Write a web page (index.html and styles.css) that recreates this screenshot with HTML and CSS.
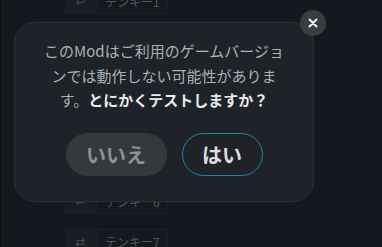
FILE: index.html
```html
<!DOCTYPE html>
<html lang="ja">
<head>
<meta charset="utf-8">
<link rel="stylesheet" href="styles.css">
</head>
<body>
<div class="frame">
  <div class="list">
    <div class="row"><div class="ico">↩</div><div class="lbl">テンキー1</div></div>
    <div class="row"><div class="ico">↩</div><div class="lbl">テンキー2</div></div>
    <div class="row"><div class="ico">↩</div><div class="lbl">テンキー3</div></div>
    <div class="row"><div class="ico">↩</div><div class="lbl">テンキー4</div></div>
    <div class="row"><div class="ico">↩</div><div class="lbl">テンキー5</div></div>
    <div class="row"><div class="ico">↩</div><div class="lbl">テンキー6</div></div>
    <div class="row"><div class="ico">⇄</div><div class="lbl">テンキー7</div></div>
  </div>
  <div class="dialog">
    <button class="close" aria-label="閉じる">
      <svg width="10" height="10" viewBox="0 0 10 10"><path d="M1.5 1.5 L8.5 8.5 M8.5 1.5 L1.5 8.5" stroke="#f2f2f2" stroke-width="2" stroke-linecap="round"/></svg>
    </button>
    <p class="msg">このModはご利用のゲームバージョンでは動作しない可能性があります。<strong>とにかくテストしますか？</strong></p>
    <div class="actions">
      <button class="btn no">いいえ</button>
      <button class="btn yes">はい</button>
    </div>
  </div>
</div>
</body>
</html>
```
FILE: styles.css
```css
html, body {
  margin: 0;
  padding: 0;
  background: #14171d;
  font-family: "Noto Sans CJK JP", "Noto Sans", sans-serif;
}
.frame {
  position: relative;
  width: 382px;
  height: 247px;
  overflow: hidden;
  background: #14171d;
  border-left: 1px solid #0c0e12;
  box-sizing: border-box;
}
.list {
  display: flex;
  flex-direction: column;
  gap: 15px;
  margin-top: -11px;
  padding-left: 64px;
}
.row {
  display: flex;
  height: 25px;
  width: 103px;
}
.ico {
  width: 31px;
  background: #1a1d23;
  color: #45484e;
  font-size: 12px;
  display: flex;
  align-items: center;
  justify-content: center;
  font-family: "DejaVu Sans", sans-serif;
}
.lbl {
  flex: 1;
  border: 1px solid #1c1f25;
  background: #15181e;
  color: #54575d;
  font-size: 12px;
  display: flex;
  align-items: center;
  padding-left: 8px;
  white-space: nowrap;
}
.dialog {
  position: absolute;
  left: 13px;
  top: 22px;
  width: 300px;
  height: 180px;
  box-sizing: border-box;
  background: #1f2228;
  border: 1px solid #2b2e34;
  border-radius: 20px;
  padding: 16px 24px 25px;
}
.close {
  position: absolute;
  top: -13px;
  right: -13px;
  width: 26px;
  height: 26px;
  border: none;
  border-radius: 50%;
  background: #393c41;
  display: flex;
  align-items: center;
  justify-content: center;
  padding: 0;
}
.msg {
  margin: 0;
  font-size: 15px;
  line-height: 24.5px;
  color: #adafb3;
  text-align: center;
}
.msg strong {
  color: #eaeaea;
  font-weight: 700;
}
.actions {
  display: flex;
  justify-content: center;
  gap: 15px;
  margin-top: 20px;
}
.btn {
  height: 43px;
  border-radius: 22px;
  font-family: "Noto Sans CJK JP", sans-serif;
  font-size: 20px;
  font-weight: 700;
  padding: 0;
  box-sizing: border-box;
  white-space: nowrap;
  display: flex;
  align-items: center;
  justify-content: center;
}
.no {
  width: 101px;
  border: none;
  background: #35383d;
  color: #8e9195;
}
.yes {
  width: 81px;
  border: 1px solid #1589aa;
  background: transparent;
  color: #dcdcdc;
}
```
